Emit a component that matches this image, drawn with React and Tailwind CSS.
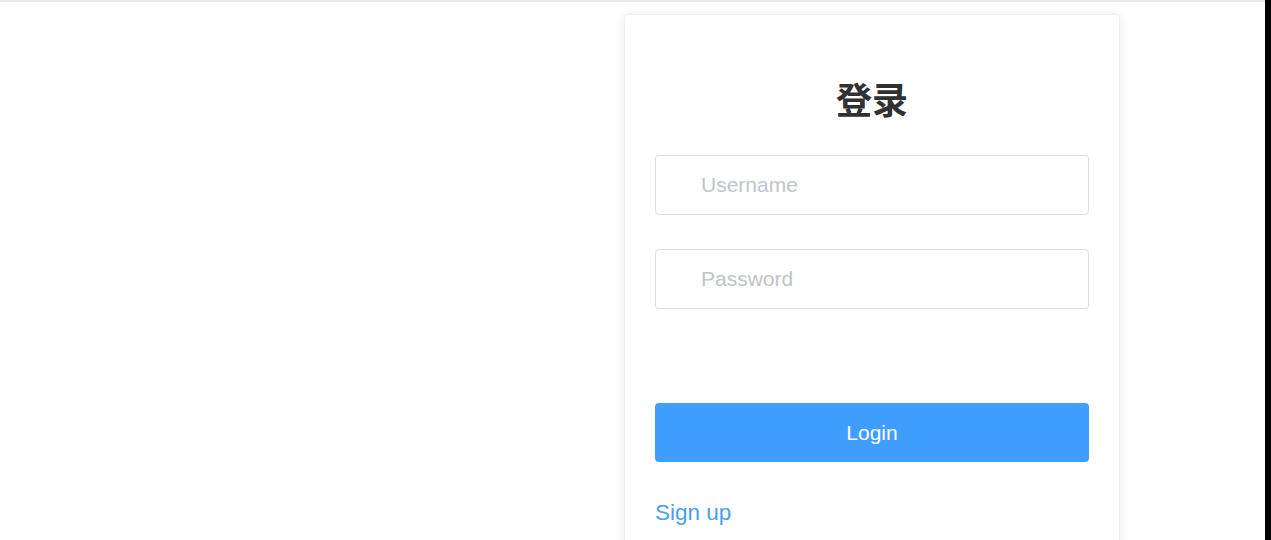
import { useState } from "react";

const font = { fontFamily: '"Liberation Sans", Arial, "Noto Sans CJK SC", sans-serif' };

const LoginCard = () => {
  const [username, setUsername] = useState("");
  const [password, setPassword] = useState("");

  return (
    <div className="w-[496px] rounded-[4px] border border-[#ebeef5] bg-white px-[30px] pt-[30px] pb-10 shadow-[0_2px_12px_0_rgba(0,0,0,0.08)]">
      <h1 className="mt-[33px] h-[48px] text-center text-[36px] leading-[48px] font-bold text-[#303133]">
        登录
      </h1>
      <input
        type="text"
        value={username}
        onChange={(e) => setUsername(e.target.value)}
        placeholder="Username"
        className="mt-[29px] block h-[60px] w-full rounded-[4px] border border-[#dcdfe6] pl-[45px] text-[21px] text-[#606266] outline-none placeholder:text-[#c0c4cc]"
      />
      <input
        type="password"
        value={password}
        onChange={(e) => setPassword(e.target.value)}
        placeholder="Password"
        className="mt-[34px] block h-[60px] w-full rounded-[4px] border border-[#dcdfe6] pl-[45px] text-[21px] text-[#606266] outline-none placeholder:text-[#c0c4cc]"
      />
      <button className="mt-[94px] block h-[59px] w-full cursor-pointer rounded-[4px] bg-[#409eff] text-[21px] text-white hover:bg-[#66b1ff]">
        Login
      </button>
      <div className="mt-[36px] leading-[30px]">
        <a href="#" className="text-[22.5px] text-[#4aa0f0]">
          Sign up
        </a>
      </div>
    </div>
  );
};

const App = () => {
  return (
    <div className="flex h-[540px] overflow-hidden bg-white" style={font}>
      <div className="flex-1 min-w-0">
        <div className="h-[2px] bg-[#ebebeb]" />
        <div className="pl-[624px] pt-[12px]">
          <LoginCard />
        </div>
      </div>
      <div className="w-[6px] bg-black" />
    </div>
  );
};

export default App;
